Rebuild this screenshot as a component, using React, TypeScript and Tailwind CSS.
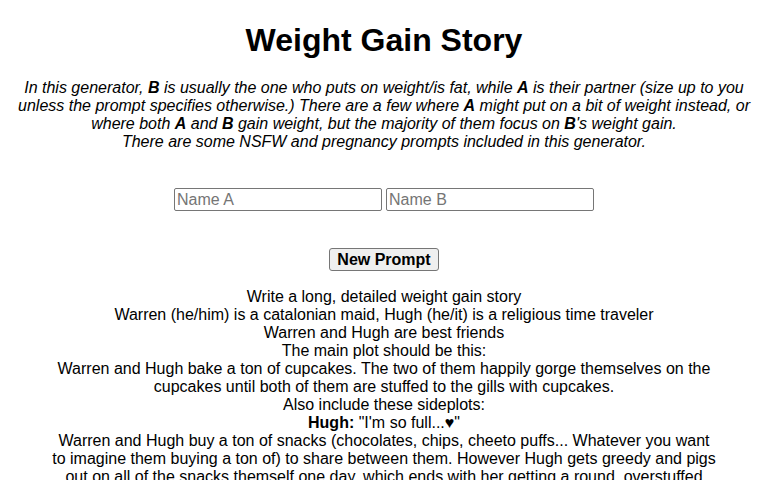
import { useState } from 'react';

const lines = [
    'Write a long, detailed weight gain story',
    'Warren (he/him) is a catalonian maid, Hugh (he/it) is a religious time traveler',
    'Warren and Hugh are best friends',
    'The main plot should be this:',
    'Warren and Hugh bake a ton of cupcakes. The two of them happily gorge themselves on the cupcakes until both of them are stuffed to the gills with cupcakes.',
    'Also include these sideplots:',
];

export default function App() {
    const [nameA, setNameA] = useState('');
    const [nameB, setNameB] = useState('');

    return (
        <div className="min-h-[480px] bg-white px-2 pt-[22px] text-center font-['Liberation_Sans',Arial,sans-serif] text-black">
            <h1 className="mb-[21px] text-[32px] font-bold leading-[36px]">
                Weight Gain Story
            </h1>

            <p className="text-base italic leading-[18px]">
                In this generator, <b>B</b> is usually the one who puts on
                weight/is fat, while <b>A</b> is their partner (size up to you
                unless the prompt specifies otherwise.) There are a few where{' '}
                <b>A</b> might put on a bit of weight instead, or where both{' '}
                <b>A</b> and <b>B</b> gain weight, but the majority of them
                focus on <b>B</b>'s weight gain.
                <br />
                There are some NSFW and pregnancy prompts included in this
                generator.
            </p>

            <div className="mt-[37px] flex justify-center gap-1">
                <input
                    value={nameA}
                    onChange={(e) => setNameA(e.target.value)}
                    placeholder="Name A"
                    className="h-[23px] w-[208px] rounded-[2px] border border-[#767676] px-[2px] text-base leading-[18px] placeholder:text-[#757575]"
                />
                <input
                    value={nameB}
                    onChange={(e) => setNameB(e.target.value)}
                    placeholder="Name B"
                    className="h-[23px] w-[208px] rounded-[2px] border border-[#767676] px-[2px] text-base leading-[18px] placeholder:text-[#757575]"
                />
            </div>

            <div className="mt-[37px] flex justify-center">
                <button className="h-[23px] w-[110px] rounded-[3px] border border-[#767676] bg-[#efefef] text-base font-bold leading-[18px]">
                    New Prompt
                </button>
            </div>

            <div className="mx-auto mt-[17px] max-w-[666px] text-base leading-[18px]">
                {lines.map((line) => (
                    <div key={line}>{line}</div>
                ))}
                <div>
                    <b>Hugh:</b> "I'm so full...♥"
                </div>
                <div>
                    Warren and Hugh buy a ton of snacks (chocolates, chips,
                    cheeto puffs... Whatever you want to imagine them buying a
                    ton of) to share between them. However Hugh gets greedy and
                    pigs out on all of the snacks themself one day, which ends
                    with her getting a round, overstuffed belly.
                </div>
            </div>
        </div>
    );
}
